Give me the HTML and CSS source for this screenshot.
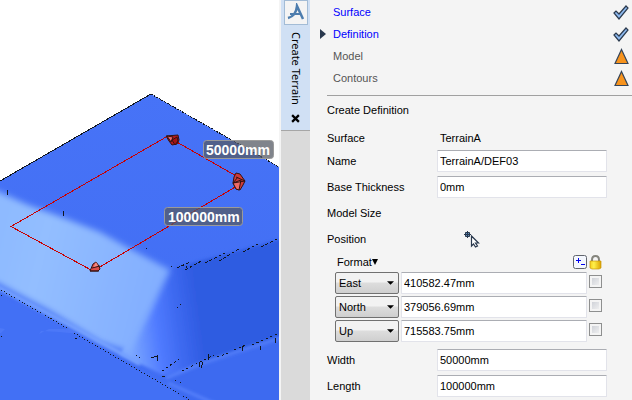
FILE: index.html
```html
<!DOCTYPE html>
<html lang="en">
<head>
<meta charset="utf-8">
<meta name="viewport" content="width=device-width, initial-scale=1">
<title>Create Terrain</title>
<link rel="stylesheet" href="styles.css">
</head>
<body>
<div class="app">
  <main class="viewport">
    <svg class="scene" viewBox="0 0 279 400" preserveAspectRatio="xMidYMid slice" role="img" aria-label="Terrain model">
      <defs>
        <filter id="soft" x="-20%" y="-20%" width="140%" height="140%"><feGaussianBlur stdDeviation="3"/></filter>
        <filter id="faint" x="-20%" y="-20%" width="140%" height="140%"><feGaussianBlur stdDeviation="1.5"/></filter>
        <linearGradient id="top" x1="0" y1="0" x2="0" y2="1"><stop offset="0" stop-color="#4773f7"/><stop offset="1" stop-color="#406df3"/></linearGradient>
        <linearGradient id="slope" gradientUnits="userSpaceOnUse" x1="0" y1="240" x2="170" y2="280"><stop offset="0" stop-color="#8ebaff"/><stop offset=".25" stop-color="#93beff"/><stop offset="1" stop-color="#81adff"/></linearGradient>
        <linearGradient id="side" gradientUnits="userSpaceOnUse" x1="128" y1="330" x2="200" y2="320"><stop offset="0" stop-color="#7ba7ff"/><stop offset=".4" stop-color="#507bff"/><stop offset=".7" stop-color="#3d69f0"/><stop offset="1" stop-color="#2f5be1"/></linearGradient>
        <clipPath id="ground"><path d="M0 181 151 94 279 167V400H0Z"/></clipPath>
      </defs>
      <path fill="#fff" d="M0 0h279v400H0z"/>
      <g clip-path="url(#ground)">
        <path fill="url(#top)" d="M0 90h279v310H0z"/>
        <path filter="url(#faint)" fill="url(#side)" d="M173 268 285 238V340L204 366 163 375 120 354Z"/>
        <path filter="url(#soft)" fill="url(#slope)" d="M-12 187 28 205 64 218 100 232 125 246 170 270 153 307 130 352 100 342 50 311-12 278Z"/>
        <path filter="url(#faint)" fill="#4270f5" d="M-5 292 40 314 80 336 162 383 195 403H-5Z"/>
        <path filter="url(#faint)" fill="none" stroke="#76a2ff" stroke-width="4" d="M-4 286 75 328 140 364"/>
        <path filter="url(#faint)" fill="#3e6bf0" d="M164 379 204 363 285 337V405H190Z"/>
        <path filter="url(#faint)" fill="none" stroke="#5681fb" stroke-width="3" d="M166 378 200 364 236 352 283 337M168 383 218 405"/>
        <path fill="#5580fb" opacity=".5" d="m39 334 10-5h20l10 5-20-2-18-1zM0 328l5 1-4 4H0z"/>
      </g>
      <g fill="none" stroke="#101620" shape-rendering="crispEdges">
        <path d="M0 181 151 94"/>
        <path stroke-dasharray="2 1" d="M151 94 279 167"/>
        <path stroke-dasharray="1 2" d="M1 290 67 328M74 333 190 400"/>
        <path d="M7 190v5M63 211v5"/>
        <path stroke-dasharray="3 2" d="m177 268 11-5-3 7 18-10M205 263l22-11M219 261l20-12M243 252l15-8M261 247l18-9"/>
        <path stroke-dasharray="2 3" d="m162 371 17-12M182 371l32-16M217 357l12-4M234 350l12-5M252 345l25-11"/>
        <path d="m151 358 6-2v5M208 354v6M242 346v5M260 346v4M275 338v5M199 362v5M203 362l-2 6M146 248v1M171 266v1M180 304v1M177 307v1M136 355h1M139 357h1M75 338h2M1 295h1M1 336h1M162 376h3M175 380h1M180 382h1"/>
      </g>
      <path fill="none" stroke="#c80000" shape-rendering="crispEdges" d="M11 226.500 167 136.500 238 177 237 186 93 271Z"/>
      <g stroke="#341111" stroke-width="1" stroke-linejoin="round">
        <path fill="#b61919" d="m166 136 12-1 1 5-2 4-5 1-3-4z"/><path fill="#f06b66" d="m167 136 6 1-2 5z"/><path fill="#a21313" d="m172 140 5-3 1 4-3 4z"/>
        <path fill="#cf3b3a" d="m236 173 4 1 5 7-2 4-3 5-4-1-3-6 1-6z"/><path fill="#ee6a66" d="m233 183 8-3-2 10-3-1z"/><path fill="none" d="m236 177 9 4-12 2 5-6"/>
        <path fill="#dd4c48" d="m90 271 3-7 3-2 3 4 1 3-2 2z"/><path fill="#f48a82" stroke="none" d="m93 268 3-6 2 4z"/><path fill="none" d="m92 268 8-2M90 271h9"/>
      </g>
      <g class="tag"><rect x="203.500" y="140.500" width="70" height="18" rx="3"/><text x="206" y="155">50000mm</text></g>
      <g class="tag"><rect x="164.500" y="207.500" width="78" height="18" rx="3"/><text x="168" y="222">100000mm</text></g>
    </svg>
  </main>

  <aside class="dock">
    <div class="tab">
      <button class="logo" type="button" aria-label="Application">
        <svg width="20" height="20" viewBox="0 0 20 20"><path fill="none" stroke="#4d7dae" stroke-width="2.500" d="M2 15Q10 13 11 3l6 13"/><path fill="none" stroke="#4d7dae" stroke-width="2" d="M4 11h11"/></svg>
      </button>
      <span class="tab-title">Create Terrain</span>
      <button class="close" type="button" aria-label="Close">
        <svg width="9" height="9" viewBox="0 0 8 8"><path fill="none" stroke="#000" stroke-width="2" d="m1 1 6 6M7 1 1 7"/></svg>
      </button>
    </div>
  </aside>

  <section class="panel">
    <nav class="steps">
      <a class="step done" href="#surface"><span class="marker"></span><span class="step-name">Surface</span><svg class="status" viewBox="0 0 16 16"><path class="check" d="m1 9 2-2 3 3 7-8 2 2-9 11z"/></svg></a>
      <a class="step done" href="#definition"><span class="marker"><svg width="6" height="10" viewBox="0 0 6 10"><path fill="#29384d" d="m0 0 6 5-6 5z"/></svg></span><span class="step-name">Definition</span><svg class="status" viewBox="0 0 16 16"><path class="check" d="m1 9 2-2 3 3 7-8 2 2-9 11z"/></svg></a>
      <a class="step" href="#model"><span class="marker"></span><span class="step-name">Model</span><svg class="status" viewBox="0 0 16 16"><path class="warn" d="m8.500 1.500 6.500 14h-13z"/></svg></a>
      <a class="step" href="#contours"><span class="marker"></span><span class="step-name">Contours</span><svg class="status" viewBox="0 0 16 16"><path class="warn" d="m8.500 1.500 6.500 14h-13z"/></svg></a>
    </nav>

    <form class="form">
      <h1 class="heading">Create Definition</h1>
      <div class="row text-row"><span>Surface</span><span class="value">TerrainA</span></div>
      <div class="row"><label for="name">Name</label><input class="field" id="name" type="text" value="TerrainA/DEF03"></div>
      <div class="row"><label for="base">Base Thickness</label><input class="field" id="base" type="text" value="0mm"></div>
      <div class="row"><span>Model Size</span></div>
      <div class="row"><span>Position</span>
        <button class="pick" type="button" aria-label="Pick position">
          <svg width="16" height="18" viewBox="0 0 16 18"><path fill="#5d8cbb" stroke="#29384d" d="M1.500 2.500h4v4h-4zM3.500 1v7M0 4.500h7"/><path fill="#fff" stroke="#29384d" stroke-width="1.200" d="M7.500 6v10l2-2 2 3 2-1-2-3h3z"/></svg>
        </button>
      </div>

      <div class="coords">
        <div class="coords-head">
          <button class="format" type="button">Format<svg width="6" height="6" viewBox="0 0 6 6"><path d="M0 0h6L3 6z"/></svg></button>
          <button class="sign" type="button" aria-label="Relative"><svg width="14" height="14" viewBox="0 0 14 14"><rect x=".5" y=".5" width="13" height="13" rx="2" fill="#f4f7fe" stroke="#61656d"/><path fill="none" stroke="#0000f0" d="M3 5.500h5M5.500 3v5M8 9.500h4"/></svg></button>
          <button class="lock" type="button" aria-label="Lock"><svg width="13" height="15" viewBox="0 0 13 15"><defs><linearGradient id="gold"><stop offset="0" stop-color="#f5cf20"/><stop offset=".35" stop-color="#fff04a"/><stop offset="1" stop-color="#dba200"/></linearGradient></defs><path fill="none" stroke="#85857d" stroke-width="2" d="M3 7V5q0-4 3.500-4T10 5v2"/><path fill="url(#gold)" stroke="#c89608" stroke-width=".7" d="M1 6h11v7l-2 1H3l-2-1z"/></svg></button>
        </div>
        <div class="coord">
          <span class="pick-axis"><select aria-label="First axis"><option>East</option><option>North</option><option>Up</option></select><svg class="arrow" viewBox="0 0 8 4"><path d="M0 0h8L4 4z"/></svg></span>
          <input class="field" type="text" aria-label="East value" value="410582.47mm">
          <input class="tick" type="checkbox" aria-label="Lock east">
        </div>
        <div class="coord">
          <span class="pick-axis"><select aria-label="Second axis"><option>East</option><option selected>North</option><option>Up</option></select><svg class="arrow" viewBox="0 0 8 4"><path d="M0 0h8L4 4z"/></svg></span>
          <input class="field" type="text" aria-label="North value" value="379056.69mm">
          <input class="tick" type="checkbox" aria-label="Lock north">
        </div>
        <div class="coord">
          <span class="pick-axis"><select aria-label="Third axis"><option>East</option><option>North</option><option selected>Up</option></select><svg class="arrow" viewBox="0 0 8 4"><path d="M0 0h8L4 4z"/></svg></span>
          <input class="field" type="text" aria-label="Up value" value="715583.75mm">
          <input class="tick" type="checkbox" aria-label="Lock up">
        </div>
      </div>

      <div class="row"><label for="width">Width</label><input class="field" id="width" type="text" value="50000mm"></div>
      <div class="row"><label for="length">Length</label><input class="field" id="length" type="text" value="100000mm"></div>
    </form>
  </section>
</div>
</body>
</html>
```
FILE: styles.css
```css
* { box-sizing: border-box; }

body {
  margin: 0;
  background: #f4f4f4;
  color: #000;
  font: 11px/14px "Liberation Sans", Arial, sans-serif;
}

button {
  padding: 0;
  border: 0;
  background: none;
  color: inherit;
  font: inherit;
}

svg { display: block; }

.app {
  display: grid;
  grid-template-columns: minmax(0, 279fr) 31px minmax(0, 322fr);
  min-height: 100vh;
}

.viewport {
  display: grid;
  min-width: 0;
  overflow: hidden;
}

.scene {
  width: 100%;
  height: 100%;
  min-height: 100vh;
}

.tag rect {
  fill: #555b66;
  fill-opacity: .75;
  stroke: #9a9a9a;
}

.tag text {
  fill: #fff;
  font: bold 14px "Liberation Sans", Arial, sans-serif;
}

/* Vertical tab strip between the model view and the panel */
.dock {
  border-left: 2px solid #f4f4f4;
  background: #dadada;
}

.tab {
  display: flex;
  flex-direction: column;
  align-items: center;
  height: 131px;
  border-bottom: 1px solid #a6a6a6;
  background: #d0e0f4;
}

.logo {
  display: grid;
  place-items: center;
  width: 24px;
  height: 25px;
  border: 1px solid #a3bcd6;
  background: #f4f4f4;
}

.tab-title {
  margin: 7px 0 9px;
  writing-mode: vertical-rl;
  font-family: "Noto Sans", sans-serif;
  line-height: 16px;
}

.panel { min-width: 0; }

.steps {
  padding: 1px 0 6px;
}

.step {
  display: flex;
  align-items: center;
  height: 22px;
  padding: 0 3px 0 10px;
  color: #555;
  text-decoration: none;
}

.step.done { color: #00f; }

.marker { width: 13px; }

.step-name { flex: 1; }

.status {
  width: 16px;
  height: 16px;
}

.check {
  fill: #8ebaf0;
  stroke: #2b3a4e;
  stroke-width: 1.2;
}

.warn {
  fill: #f7931d;
  stroke: #354458;
  stroke-width: 1.2;
}

.form {
  display: flex;
  flex-direction: column;
  gap: 4px;
  margin-left: 17px;
  padding-bottom: 3px;
  border-top: 1px solid #a0a0a0;
}

.heading {
  margin: 7px 0 8px;
  font: inherit;
}

.row {
  display: grid;
  grid-template-columns: 110px minmax(0, 170fr) 25px;
  align-items: center;
  min-height: 22px;
}

.text-row { min-height: 17px; }

.value { padding-left: 3px; }

.field {
  width: 100%;
  height: 22px;
  padding: 0 2px;
  border: 1px solid #e2e3ea;
  border-top-color: #abadb3;
  border-radius: 1px;
  background: #fff;
  color: #000;
  font: inherit;
}

.pick {
  justify-self: start;
  margin-left: 27px;
}

.coords {
  display: grid;
  gap: 2px;
  margin: 0 30px 3px 8px;
}

.coords-head {
  display: flex;
  align-items: center;
  gap: 2px;
  height: 16px;
  padding-left: 2px;
}

.format {
  display: flex;
  align-items: center;
  margin-right: auto;
}

.coord {
  display: grid;
  grid-template-columns: 64px minmax(0, 1fr) 13px;
  column-gap: 2px;
}

.pick-axis { position: relative; }

.pick-axis select {
  width: 100%;
  height: 22px;
  padding: 0 3px;
  border: 1px solid #707070;
  border-radius: 2px;
  background: linear-gradient(#f2f2f2 0 45%, #ddd 50%, #cfcfcf);
  color: #000;
  font: inherit;
  appearance: none;
}

.arrow {
  position: absolute;
  top: 9px;
  right: 5px;
  width: 7px;
  height: 4px;
  pointer-events: none;
}

.tick {
  width: 13px;
  height: 13px;
  margin: 3px 0 0;
  border: 1px solid #8e8f8f;
  background: linear-gradient(135deg, #c8cbd2, #f6f6f6);
  box-shadow: inset 0 0 0 2px #f4f4f4;
  appearance: none;
}
```
